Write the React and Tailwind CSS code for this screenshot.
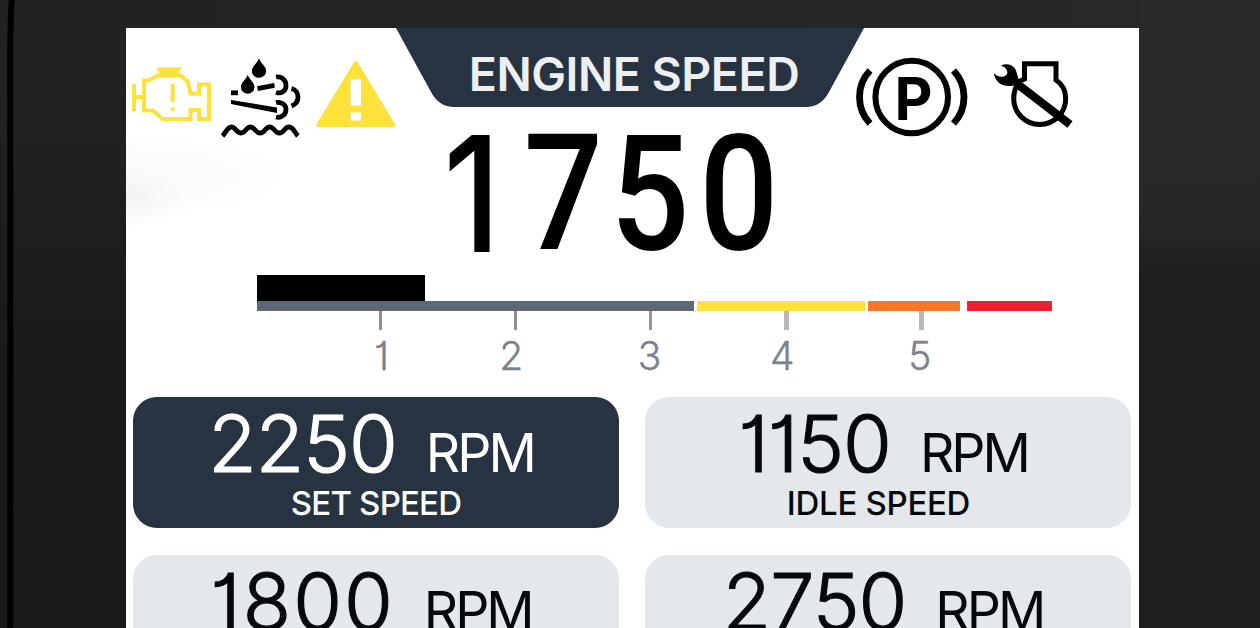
const ENGINE = "M144 80.5h5l8.500-5h23l7.500 6 2.500 12h8.500v-9h10v34.500h-10v-9h-8.500v9h-28l-9.500-8.500h-9z";

function EngineIcon() {
  return (
    <svg className="h-20 w-20 shrink-0" viewBox="132 58 80 80" fill="none" stroke="#ffe13c" strokeWidth="4">
      <path d="M134 84v27M134 97h10" />
      <path d={ENGINE} />
      <path d="M156 67.500h26l-5 8h-16z" fill="#ffe13c" stroke="none" />
      <path d="M172.700 84v18M172.700 107.500v3.500" />
    </svg>
  );
}

function ExhaustFluidIcon() {
  return (
    <svg className="ml-2 h-20 w-[82px] shrink-0" viewBox="220 58 82 80" fill="none" stroke="#000" strokeWidth="4.800">
      <path d="M259 58.500c2 5 7.200 8 7.200 12.500a7.200 6.800 0 0 1-14.400 0c0-4.500 5.200-7.500 7.200-12.500z" fill="#000" stroke="none" />
      <path d="M247.700 75c2 5 6.800 7.500 6.800 12a6.800 6.800 0 0 1-13.600 0c0-4.500 4.800-7 6.800-12z" fill="#000" stroke="none" />
      <path d="M231 92.800h7" />
      <path d="M257.500 88.600l17-3.200" />
      <path d="M231 100l46 7.500v5.500l-46-9z" fill="#000" stroke="none" />
      <path d="M276 77c5-1 10 2.500 10 8.500s-5 8.500-10 7" />
      <path d="M276 102.500c5-1 10 2 10 7s-5 9-10 7.500" />
      <path d="M291.500 88.500c4 1 6.500 4.500 6.500 8.500s-2.500 7.500-6.500 9" />
      <path d="M222.500 136c3-3 5-9 9-9s5 6 9.500 6 5-6 9.500-6 5 6 9.700 6 5-6 9.500-6 5 6 9.700 6 5-6 9.500-6 6 6 9 9" />
    </svg>
  );
}

function WarningIcon() {
  return (
    <svg className="ml-3.5 h-20 w-20 shrink-0" viewBox="316 58 80 80">
      <path d="M355.800 63l37.500 62h-75z" fill="#ffe13c" stroke="#ffe13c" strokeWidth="4" strokeLinejoin="round" />
      <path d="M350.500 79.500h10.500v26h-10.500zM350.500 112.500h10.500v8h-10.500z" fill="#fff" />
    </svg>
  );
}

function ParkingBrakeIcon() {
  return (
    <svg className="-ml-2.5 h-20 w-[116px] shrink-0" viewBox="854 57 116 80">
      <g fill="none" stroke="#000" strokeWidth="6">
        <circle cx="911.700" cy="97" r="36.300" />
        <path d="M870 70.500c-7.500 8-10.500 16-10.500 26.500s3 18.500 10.500 26.500M953.500 70.500c7.500 8 10.500 16 10.500 26.500s-3 18.500-10.500 26.500" strokeWidth="6.800" />
      </g>
      <text x="894.500" y="119.500" fontFamily="Inter, sans-serif" fontSize="58.500" fontWeight="700" textLength="38" lengthAdjust="spacingAndGlyphs">P</text>
    </svg>
  );
}

function ServiceIcon() {
  return (
    <svg className="ml-[22px] h-20 w-[84px] shrink-0" viewBox="992 57 84 80" fill="none" stroke="#000" strokeWidth="5">
      <path d="M1018 82l6.500-3V63.700h31.500V80c6 4 9.700 11 9.700 18.500a26 26 0 0 1-52 0c0-5 1-9.500 3.500-13" />
      <path d="M1016 83l54 41.500" strokeWidth="8.500" />
      <path d="M1001 65.500c8-3.500 15 1 16 8.500l2.500 8-6 3.500c-9 2-18-1.500-19.800-12.500 3 4 10 5.500 13 1.500 2-3.500-1-7-5.700-9z" fill="#000" stroke="none" />
    </svg>
  );
}

function Header() {
  return (
    <header className="flex h-[106px] pl-1.5">
      <div className="flex pt-[30px]">
        <EngineIcon />
        <ExhaustFluidIcon />
        <WarningIcon />
      </div>
      <div className="relative h-[79px] w-[468px] shrink-0">
        <svg className="absolute inset-0" width="468" height="79" viewBox="0 0 468 79">
          <path d="M0 0H468L433 64Q425 79 410 79H58Q43 79 35 64Z" fill="#273340" />
        </svg>
        <h1 className="relative pt-[18px] pl-2 text-center text-[46.500px] leading-[56px] font-semibold tracking-[-0.500px] whitespace-nowrap text-[#eceff3]">ENGINE SPEED</h1>
      </div>
      <div className="flex pt-[29px]">
        <ParkingBrakeIcon />
        <ServiceIcon />
      </div>
    </header>
  );
}

function EngineSpeed() {
  return (
    <div className="flex h-[141px] bg-[radial-gradient(ellipse_60px_32px_at_0px_62px,#f3f3f3,transparent),radial-gradient(ellipse_170px_42px_at_0px_42px,#fcfcfc_60%,transparent)] pt-[5px] pl-[304px]">
      <div className="flex origin-left scale-x-[0.86] font-['Roboto',sans-serif] text-[162px] leading-[110px] font-medium text-black">
        <span className="w-[102.300px] pr-[20px] text-right font-['Inter',sans-serif] text-[161px]">1</span>
        <span className="w-[102.300px] pl-[3px] text-center">7</span>
        <span className="w-[102.300px] text-center">5</span>
        <span className="w-[102.300px] pl-0.5 text-center">0</span>
      </div>
    </div>
  );
}

const ZONES = [
  "w-[437px] bg-[#5d6876]",
  "ml-[3px] w-[168px] bg-[#ffe13c]",
  "ml-[3px] w-[92px] bg-[#fb7629]",
  "ml-[7px] w-[85px] bg-[#ed2130]",
];

const TICKS = [
  { n: 1, tick: "h-[19px] w-[3px] bg-[#8b8f95]", label: "pl-0.5" },
  { n: 2, tick: "h-[19px] w-[3px] bg-[#8b8f95]", label: "pr-[9px]" },
  { n: 3, tick: "h-[19px] w-[3px] bg-[#98999d]", label: "pr-[3px]" },
  { n: 4, tick: "h-[19px] w-[5px] bg-[#b8b8ba]", label: "pr-2" },
  { n: 5, tick: "h-[19px] w-[5px] bg-[#b8b8ba]", label: "pr-[3px]" },
];

function Gauge() {
  return (
    <div className="ml-[131px] h-[122px] w-[796px]">
      <div className="h-[26px] w-[168px] bg-black" />
      <div className="flex h-2.5">
        {ZONES.map((zone) => (
          <div key={zone} className={zone} />
        ))}
      </div>
      <div className="ml-[56px] flex">
        {TICKS.map(({ n, tick, label }) => (
          <div key={n} className="flex w-[135.200px] flex-col items-center">
            <div className={tick} />
            <div className={label}>
              <span className="block text-[39px] leading-[52px] font-light text-[#7c838b] [-webkit-text-stroke:0.4px_#7c838b] [font-feature-settings:'cv01']">{n}</span>
            </div>
          </div>
        ))}
      </div>
    </div>
  );
}

function SpeedCard({ value, label, active, spacing = "tracking-[-1px]", labelSpacing = "tracking-[-0.800px]" }) {
  return (
    <div className={active ? "h-[131px] rounded-[24px] bg-[#273340] text-white" : "h-[131px] rounded-[24px] bg-[#e4e8eb] text-[#05090c]"}>
      <div className="flex h-[90px] items-baseline justify-center gap-[29px] pr-2.5 leading-[92px]">
        <span className={spacing + " text-[79px] font-light [-webkit-text-stroke:1.2px_currentColor] [font-feature-settings:'cv01']"}>{value}</span>
        <span className="text-[53.500px] tracking-[-3px]">RPM</span>
      </div>
      {label && <div className={labelSpacing + " -mt-0.5 text-center text-[33px] leading-[36px] font-medium"}>{label}</div>}
    </div>
  );
}

export default function App() {
  return (
    <div className="flex h-[628px] w-[1260px] overflow-hidden bg-linear-to-b from-[#222222] from-15% to-[#1a1a1a] to-60% font-['Inter',sans-serif]">
      <svg className="h-[628px] w-[126px] shrink-0" viewBox="0 0 126 628" fill="none">
        <path d="M12 -2Q10.300 15 10.300 60V630" stroke="#000" strokeWidth="6" />
      </svg>
      <div className="flex h-full w-[1134px] bg-linear-to-r from-transparent to-white/[0.03]">
        <main className="mt-7 h-[600px] w-[1013px] shrink-0 overflow-hidden bg-white">
          <Header />
          <EngineSpeed />
          <Gauge />
          <section className="grid grid-cols-2 gap-x-[26px] gap-y-[27px] pr-2 pl-[7px]">
            <SpeedCard value="2250" label="SET SPEED" active />
            <SpeedCard value="1150" label="IDLE SPEED" labelSpacing="pr-[19px] tracking-[-0.300px]" />
            <SpeedCard value="1800" spacing="tracking-[2px]" />
            <SpeedCard value="2750" />
          </section>
        </main>
        <div className="h-full flex-1 bg-linear-to-b from-[#292929] from-10% via-[#272727] via-35% to-[#1e1e1e] to-45%" />
      </div>
    </div>
  );
}
